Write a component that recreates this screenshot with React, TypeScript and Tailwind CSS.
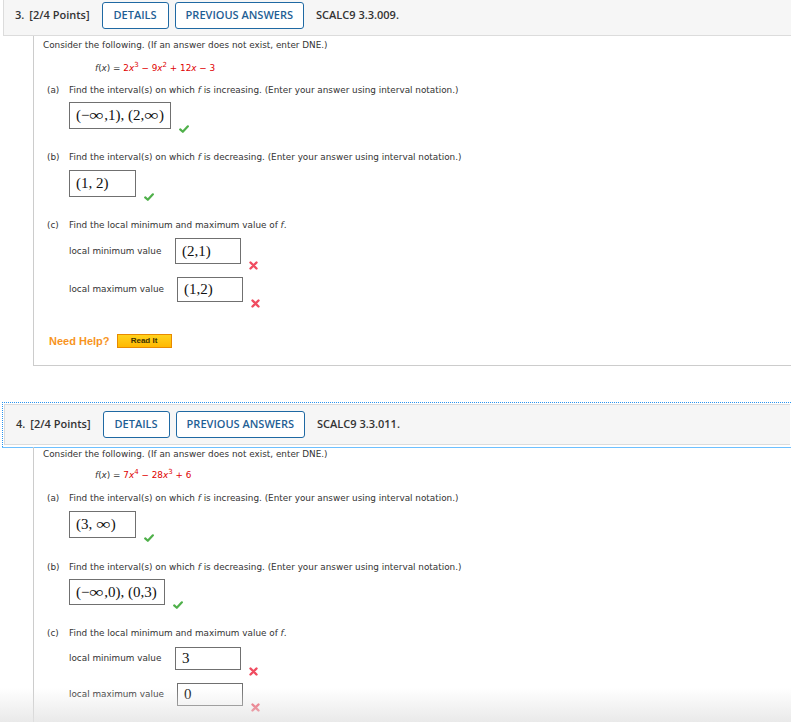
import React from 'react'

const headFont = "font-['Open_Sans',sans-serif]"
const bodyFont = "font-['DejaVu_Sans',Verdana,sans-serif]"
const mathFont = "font-['Liberation_Serif','Times_New_Roman',serif]"

const Check = () => (
  <svg width="10" height="8" viewBox="0 0 10 8" className="ml-[8px] -mb-[4px] shrink-0">
    <path
      d="M1.2 4.4 L3.8 6.8 L8.9 1.3"
      fill="none"
      stroke="#4fb04a"
      strokeWidth="2.2"
      strokeLinecap="round"
      strokeLinejoin="round"
    />
  </svg>
)

const Cross = () => (
  <svg width="9" height="9" viewBox="0 0 9 9" className="ml-[8px] -mb-[6px] shrink-0">
    <path d="M1.5 1.5 L7.5 7.5 M7.5 1.5 L1.5 7.5" stroke="#f04c60" strokeWidth="2.4" strokeLinecap="round" />
  </svg>
)

// MathJax draws a much wider infinity than the serif fallback does
const Inf = () => <span className="mx-[2px] inline-block scale-x-[1.35]">∞</span>

const Box: React.FC<{ className: string; children: React.ReactNode }> = ({ className, children }) => (
  <div
    className={`${className} ${mathFont} flex items-center border border-[#707070] bg-white pl-[6px] text-[15px] leading-none text-[#111] shrink-0`}
  >
    <span className="whitespace-pre">{children}</span>
  </div>
)

const Header: React.FC<{ num: string; code: string }> = ({ num, code }) => (
  <div
    className={`${headFont} flex h-[41px] items-center border-t border-b border-l border-[#dcdcdc] bg-[#f6f6f6] pl-[11px] text-[11px] font-semibold text-[#333]`}
  >
    <span>{num}</span>
    <span className="ml-[5px]">[2/4 Points]</span>
    <button className="ml-[12px] h-[27px] rounded-[3px] border border-[#1f69a3] bg-white px-[11px] text-[#1f5f95]">
      DETAILS
    </button>
    <button className="ml-[6px] h-[27px] rounded-[3px] border border-[#1f69a3] bg-white px-[10px] text-[#1f5f95]">
      PREVIOUS ANSWERS
    </button>
    <span className="ml-[12px]">{code}</span>
  </div>
)

const Sup: React.FC<{ children: React.ReactNode }> = ({ children }) => (
  <span className="relative -top-[4px] text-[7px] leading-none">{children}</span>
)

const Part: React.FC<{ label: string; className: string; children: React.ReactNode }> = ({
  label,
  className,
  children,
}) => (
  <div className={`${className} flex pl-[4px]`}>
    <span className="w-[22px]">{label}</span>
    <span>{children}</span>
  </div>
)

export default function App() {
  return (
    <div className="relative h-[722px] w-[791px] overflow-hidden bg-white">
      {/* Question 3 */}
      <section className="-mt-[5px]">
        <div className="ml-[3px]">
          <Header num="3." code="SCALC9 3.3.009." />
        </div>
        <div
          className={`${bodyFont} ml-[33px] border-l border-b border-[#cccccc] pl-[9px] pt-[4px] pb-[17px] text-[8.85px] leading-[11px] text-[#333]`}
        >
          <p>Consider the following. (If an answer does not exist, enter DNE.)</p>
          <p className="mt-[12px] pl-[52px]">
            <i>f</i>(<i>x</i>) ={' '}
            <span className="text-[#e00000]">
              2<i>x</i>
              <Sup>3</Sup> − 9<i>x</i>
              <Sup>2</Sup> + 12<i>x</i> − 3
            </span>
          </p>
          <Part label="(a)" className="mt-[11px]">
            Find the interval(s) on which <i>f</i> is increasing. (Enter your answer using interval notation.)
          </Part>
          <div className="mt-[6px] flex items-end pl-[26px]">
            <Box className="h-[27px] w-[102px]">
              (−<Inf />,1), (2,<Inf />)
            </Box>
            <Check />
          </div>
          <Part label="(b)" className="mt-[23px]">
            Find the interval(s) on which <i>f</i> is decreasing. (Enter your answer using interval notation.)
          </Part>
          <div className="mt-[7px] flex items-end pl-[26px]">
            <Box className="h-[27px] w-[67px]">(1, 2)</Box>
            <Check />
          </div>
          <Part label="(c)" className="mt-[23px]">
            Find the local minimum and maximum value of <i>f</i>.
          </Part>
          <div className="mt-[7px] flex items-end pl-[26px]">
            <span className="w-[106px] self-center">local minimum value</span>
            <Box className="h-[26px] w-[66px]">(2,1)</Box>
            <Cross />
          </div>
          <div className="mt-[13px] flex items-end pl-[26px]">
            <span className="w-[108px] self-center">local maximum value</span>
            <Box className="h-[25px] w-[66px]">(1,2)</Box>
            <Cross />
          </div>
          <div className="mt-[32px] flex h-[14px] items-center pl-[6px]">
            <span className="font-['Liberation_Sans',Arial,sans-serif] text-[11px] font-bold text-[#f7941e]">
              Need Help?
            </span>
            <button className="ml-[7px] flex h-[14px] w-[55px] items-center justify-center border border-[#e88a00] bg-linear-to-b from-[#ffd21c] to-[#ffb800] font-['Liberation_Sans',Arial,sans-serif] text-[8px] font-bold leading-none text-[#3d3000]">
              Read It
            </button>
          </div>
        </div>
      </section>

      {/* Question 4 */}
      <section className="mt-[36px]">
        <div className="ml-[2px] border-t border-l border-dotted border-[#2a95f0] p-[1px] pb-[2px] shadow-[0_1px_0_0_#6ec0ff]">
          <Header num="4." code="SCALC9 3.3.011." />
        </div>
        <div className={`${bodyFont} ml-[33px] border-l border-[#cccccc] pl-[9px] pt-[2px] text-[8.85px] leading-[11px] text-[#333]`}>
          <p>Consider the following. (If an answer does not exist, enter DNE.)</p>
          <p className="mt-[10px] pl-[52px]">
            <i>f</i>(<i>x</i>) ={' '}
            <span className="text-[#e00000]">
              7<i>x</i>
              <Sup>4</Sup> − 28<i>x</i>
              <Sup>3</Sup> + 6
            </span>
          </p>
          <Part label="(a)" className="mt-[12px]">
            Find the interval(s) on which <i>f</i> is increasing. (Enter your answer using interval notation.)
          </Part>
          <div className="mt-[7px] flex items-end pl-[26px]">
            <Box className="h-[27px] w-[67px]">
              (3, <Inf />)
            </Box>
            <Check />
          </div>
          <Part label="(b)" className="mt-[24px]">
            Find the interval(s) on which <i>f</i> is decreasing. (Enter your answer using interval notation.)
          </Part>
          <div className="mt-[6px] flex items-end pl-[26px]">
            <Box className="h-[26px] w-[96px]">
              (−<Inf />,0), (0,3)
            </Box>
            <Check />
          </div>
          <Part label="(c)" className="mt-[23px]">
            Find the local minimum and maximum value of <i>f</i>.
          </Part>
          <div className="mt-[8px] flex items-end pl-[26px]">
            <span className="w-[106px] self-center">local minimum value</span>
            <Box className="h-[23px] w-[66px]">3</Box>
            <Cross />
          </div>
          <div className="mt-[13px] flex items-end pl-[26px]">
            <span className="w-[108px] self-center">local maximum value</span>
            <Box className="h-[23px] w-[66px]">0</Box>
            <Cross />
          </div>
          <div className="h-[60px]" />
        </div>
      </section>

      {/* bottom scroll shade */}
      <div className="pointer-events-none absolute inset-x-0 bottom-0 h-[34px] bg-linear-to-b from-white/0 to-[#e4e4e4]/80" />
    </div>
  )
}
